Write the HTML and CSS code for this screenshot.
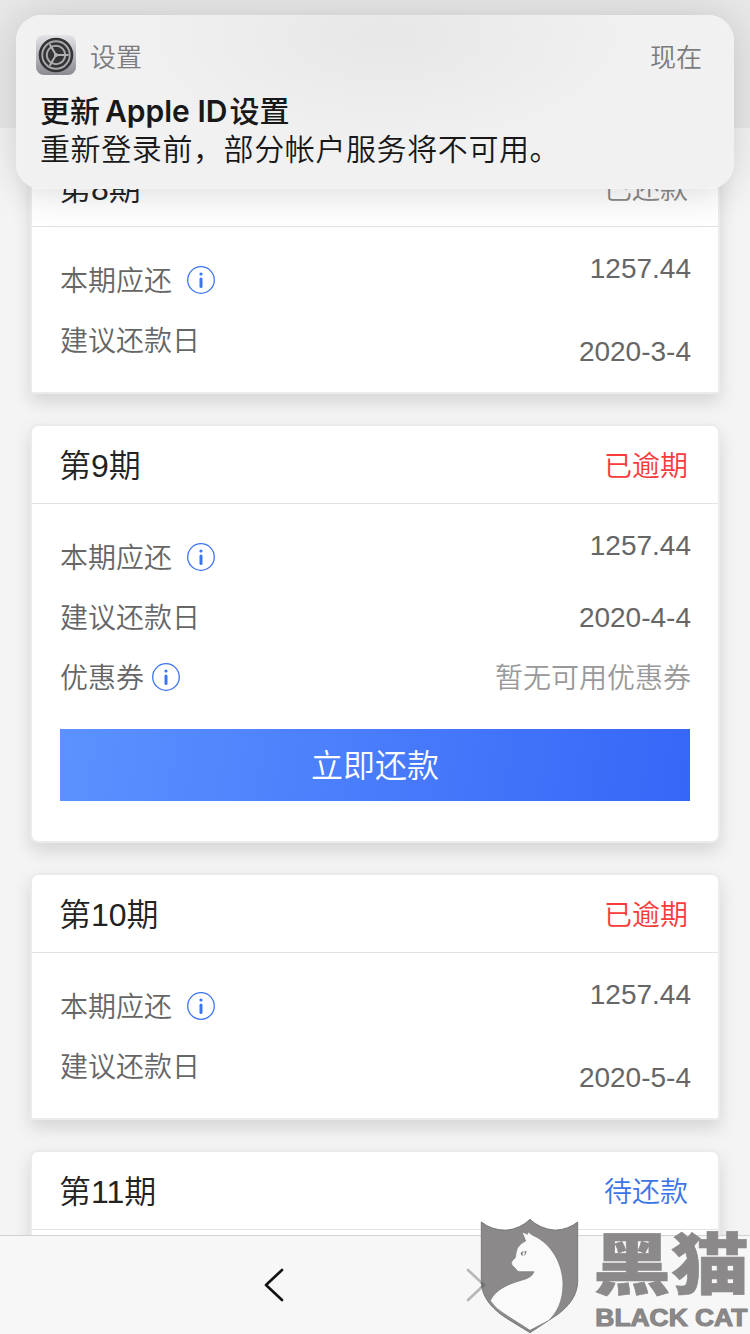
FILE: index.html
```
<!DOCTYPE html>
<html lang="zh-CN">
<head>
<meta charset="utf-8">
<title>还款</title>
<link rel="stylesheet" href="styles.css">
</head>
<body>
<svg width="0" height="0" class="defs">
  <symbol id="info" viewBox="0 0 28 28">
    <circle cx="14" cy="14" r="13.3" fill="none" stroke="#3d74f2" stroke-width="1.3"/>
    <circle cx="14" cy="8" r="1.6" fill="#3d74f2"/>
    <path d="M14 13V20.500" stroke="#3d74f2" stroke-width="3" stroke-linecap="round"/>
  </symbol>
</svg>
<div class="screen">
  <div class="topbar"></div>
  <main class="list">
    <section class="card card-square">
      <header class="card-head"><h2>第8期</h2><span class="state done">已还款</span></header>
      <div class="card-body">
        <div class="labels"><div>本期应还<svg class="info spaced"><use href="#info"/></svg></div><div>建议还款日</div></div>
        <div class="values"><div>1257.44</div><div>2020-3-4</div></div>
      </div>
    </section>
    <section class="card">
      <header class="card-head"><h2>第9期</h2><span class="state late">已逾期</span></header>
      <div class="card-body current">
        <div class="labels"><div>本期应还<svg class="info spaced"><use href="#info"/></svg></div><div>建议还款日</div><div>优惠券<svg class="info"><use href="#info"/></svg></div></div>
        <div class="values"><div>1257.44</div><div>2020-4-4</div><div class="muted">暂无可用优惠券</div></div>
      </div>
      <button class="pay">立即还款</button>
    </section>
    <section class="card card-square">
      <header class="card-head"><h2>第10期</h2><span class="state late">已逾期</span></header>
      <div class="card-body">
        <div class="labels"><div>本期应还<svg class="info spaced"><use href="#info"/></svg></div><div>建议还款日</div></div>
        <div class="values"><div>1257.44</div><div>2020-5-4</div></div>
      </div>
    </section>
    <section class="card">
      <header class="card-head"><h2>第11期</h2><span class="state wait">待还款</span></header>
      <div class="card-body"></div>
    </section>
  </main>
  <nav class="toolbar">
    <svg class="chev" viewBox="0 0 20 34"><path d="M18 2L2 17L18 32"/></svg>
    <svg class="chev off" viewBox="0 0 20 34"><path d="M2 2L18 17L2 32"/></svg>
  </nav>

  <aside class="banner">
    <div class="banner-top">
      <svg class="app" viewBox="0 0 40 40">
        <defs><linearGradient id="metal" x2="0" y2="1"><stop stop-color="#e4e4e8"/><stop offset="1" stop-color="#8b8a90"/></linearGradient></defs>
        <rect width="40" height="40" rx="8" fill="url(#metal)"/>
        <circle cx="20" cy="20" r="17" fill="#a9a8ad"/>
        <g fill="none" stroke="#343436">
          <circle cx="20" cy="20" r="16" stroke-width="2.600"/>
          <circle cx="20" cy="20" r="11.500" stroke-width="2.600"/>
        </g>
        <circle cx="20" cy="20" r="8.200" fill="#343436"/>
        <path d="M20 20H32.500M20 20L13.700 9.200M20 20L13.700 30.800" stroke="#b3b2b7" stroke-width="2"/>
        <circle cx="20" cy="20" r="2" fill="#b3b2b7"/>
      </svg>
      <span>设置</span><span class="time">现在</span>
    </div>
    <div class="banner-title">更新<span class="latin">Apple ID</span>设置</div>
    <div class="banner-text">重新登录前，部分帐户服务将不可用。</div>
  </aside>

  <svg class="watermark" viewBox="0 0 840 372">
    <path class="shield" d="M34 36Q64 60 108 61Q152 56 180 28Q208 56 255 61Q296 58 323 36V212C323 262 288 298 250 322L180 368L110 325C62 294 34 258 34 212Z"/>
    <path class="cat" d="M61 272C76 240 110 224 150 212Q186 204 192 185H151C143 186 141 181 135 174Q123 166 124 157C127 150 134 148 136 142Q137 129 142 115Q150 100 167 93L156 65L172 73L175 66L188 76C232 94 276 145 279 220C280 270 261 310 235 332L180 361L105 313Q75 295 61 272Z"/>
    <path class="eye" d="M152 130Q155 123 162 125L157 130L159 137L154 136ZM163 124L170 124L166 134L161 137L165 130Z"/>
    <path class="chev-over" d="M34 217L42 225L34 233"/>
    <text class="wm-cn" transform="translate(369 236) scale(1 .87)" textLength="468" lengthAdjust="spacingAndGlyphs">黑猫</text>
    <text class="wm-en" x="376" y="348" textLength="456" lengthAdjust="spacingAndGlyphs">BLACK CAT</text>
  </svg>
</div>
</body>
</html>
```
FILE: styles.css
```
* { box-sizing: border-box; }
body { margin: 0; font-family: "Liberation Sans", "Noto Sans CJK SC", sans-serif; }
.defs { position: absolute; }
.screen { position: relative; width: 750px; height: 1334px; overflow: hidden; display: flex; flex-direction: column; background: #f4f4f4; }
.topbar { flex: none; height: 128px; background: #e8e8e8; }
.list { flex: 1; min-height: 0; overflow: hidden; padding: 19px 30px 0; display: flex; flex-direction: column; gap: 30px; }
.card { flex: none; border: 2px solid #ebebeb; border-radius: 8px; background: #fff; box-shadow: 0 8px 18px rgba(0,0,0,.13); }
.card-square { border-radius: 8px 8px 0 0; }
.card-head { height: 78px; border-bottom: 1px solid #e3e3e3; padding: 2px 30px 0 27px; display: flex; align-items: center; justify-content: space-between; }
.card-head h2 { margin: 0; font-size: 32px; font-weight: 350; color: #222; line-height: 76px; }
.state { font-size: 28px; font-weight: 350; line-height: 76px; padding-top: 3px; }
.done { color: #888; }
.late { color: #fb3a3a; }
.wait { color: #3b76e8; }
.card-body { height: 165px; padding: 0 27px 0 28px; display: flex; justify-content: space-between; font-size: 28px; font-weight: 350; color: #666; }
.labels { padding-top: 22px; }
.labels div { height: 60px; display: flex; align-items: center; }
.values { text-align: right; }
.values div { height: 83px; line-height: 83px; }
.current { height: 225px; }
.current .values { padding-top: 6px; }
.current .values div { height: 72px; line-height: 72px; }
.current .values .muted { height: 60px; line-height: 50px; color: #999; }
.info { width: 28px; height: 28px; margin: 2px 0 0 8px; }
.spaced { margin-left: 15px; }
.pay { display: block; width: 630px; height: 72px; margin: 0 28px 40px; padding: 1px 0 0; border: 0; color: #fff; font: 350 32px/72px "Liberation Sans", "Noto Sans CJK SC", sans-serif; background: linear-gradient(100deg, #5b92ff, #3666f7); }
.toolbar { flex: none; height: 99px; border-top: 1px solid #d2d2d2; background: #f7f7f7; display: flex; gap: 182px; padding: 32px 0 0 264px; }
.chev { width: 20px; height: 34px; fill: none; stroke: #111; stroke-width: 2.600; stroke-linecap: round; stroke-linejoin: round; }
.off { stroke: #b7b7b7; }
.banner { position: absolute; left: 16px; top: 15px; width: 718px; height: 174px; border-radius: 26px; padding: 20px 32px 0 20px; background: radial-gradient(ellipse 260px 120px at 370px 20px, #e7e7e8, #f1f1f2); box-shadow: 0 2px 40px rgba(0,0,0,.16), inset 0 0 1px #fff; }
.banner-top { display: flex; align-items: center; height: 40px; font-size: 26px; font-weight: 350; color: #7b7b7d; }
.app { width: 40px; height: 40px; margin-right: 14px; }
.time { margin-left: auto; }
.banner-title, .banner-text { margin-left: 4px; color: #181818; white-space: nowrap; }
.banner-title { margin-top: 17px; height: 38px; line-height: 38px; font-family: "Inter", "Noto Sans CJK SC", sans-serif; font-size: 30px; font-weight: 500; }
.latin { margin: 0 2px 0 5px; font-weight: 600; }
.banner-text { margin-top: 1px; height: 38px; line-height: 38px; font-size: 30px; font-weight: 350; letter-spacing: .6px; }
.watermark { position: absolute; left: 470px; top: 1210px; width: 280px; height: 124px; }
.shield { fill: #8b898a; stroke: #777; stroke-width: 3; }
.cat { fill: #fafafa; stroke: #777; stroke-width: 2; }
.eye { fill: #777; }
.chev-over { fill: none; stroke: #666; stroke-opacity: .6; stroke-width: 8; }
.wm-cn { font-family: "Liberation Sans", "Noto Sans CJK SC", sans-serif; font-size: 230px; font-weight: 900; fill: #8b898a; stroke: #8b898a; stroke-width: 2; }
.wm-en { font-family: "Liberation Sans", sans-serif; font-size: 70px; font-weight: 700; fill: #8b898a; stroke: #858384; stroke-width: 3; }
```
